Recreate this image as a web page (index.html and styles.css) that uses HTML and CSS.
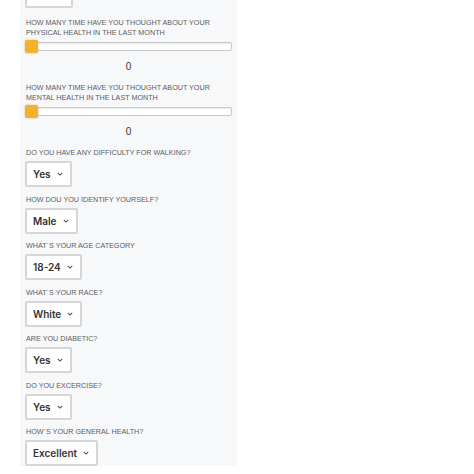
FILE: index.html
```html
<!DOCTYPE html>
<html lang="en">
<head>
    <meta charset="UTF-8">
    <meta name="viewport" content="width=device-width, initial-scale=1.0">
    <title>Health Survey</title>
    <link rel="stylesheet" href="styles.css">
</head>
<body>
    <div class="panel">
        <!-- previous question, scrolled mostly out of view -->
        <div class="field top-field">
            <div class="select">&nbsp;</div>
        </div>

        <div class="field">
            <div class="label">How many time have you thought about your<br>physical health in the last month</div>
            <div class="slider"><div class="thumb"></div></div>
            <div class="value">0</div>
        </div>

        <div class="field">
            <div class="label">How many time have you thought about your<br>mental health in the last month</div>
            <div class="slider"><div class="thumb"></div></div>
            <div class="value">0</div>
        </div>

        <div class="field">
            <div class="label">Do you have any difficulty for walking?</div>
            <div class="select">Yes <svg class="chev" viewBox="0 0 8 5"><path d="M1 1l3 3 3-3"/></svg></div>
        </div>

        <div class="field">
            <div class="label">How dou you identify yourself?</div>
            <div class="select">Male <svg class="chev" viewBox="0 0 8 5"><path d="M1 1l3 3 3-3"/></svg></div>
        </div>

        <div class="field">
            <div class="label">What´s your age category</div>
            <div class="select">18-24 <svg class="chev" viewBox="0 0 8 5"><path d="M1 1l3 3 3-3"/></svg></div>
        </div>

        <div class="field">
            <div class="label">What´s your race?</div>
            <div class="select">White <svg class="chev" viewBox="0 0 8 5"><path d="M1 1l3 3 3-3"/></svg></div>
        </div>

        <div class="field">
            <div class="label">Are you diabetic?</div>
            <div class="select">Yes <svg class="chev" viewBox="0 0 8 5"><path d="M1 1l3 3 3-3"/></svg></div>
        </div>

        <div class="field">
            <div class="label">Do you excercise?</div>
            <div class="select">Yes <svg class="chev" viewBox="0 0 8 5"><path d="M1 1l3 3 3-3"/></svg></div>
        </div>

        <div class="field">
            <div class="label">How´s your general health?</div>
            <div class="select">Excellent <svg class="chev" viewBox="0 0 8 5"><path d="M1 1l3 3 3-3"/></svg></div>
        </div>
    </div>
</body>
</html>
```

FILE: styles.css
```css
body {
    margin: 0;
    background-color: #fff;
    font-family: "Liberation Sans", Arial, sans-serif;
    color: #333;
    height: 474px;
    overflow: hidden;
}
.panel {
    margin-left: 20px;
    width: 207px;
    padding: 0 5px;
    min-height: 474px;
    background-color: #f7f8fa;
}
.field {
    margin-bottom: 7.5px;
}
.top-field {
    margin-top: -18px;
    margin-bottom: 10px;
}
.label {
    font-size: 7.2px;
    line-height: 10px;
    color: #5c5c5c;
    text-transform: uppercase;
    padding-left: 1px;
    margin-bottom: 3px;
}
.slider {
    position: relative;
    height: 7px;
    margin-top: 4px;
    border: 1px solid #c9c9c9;
    border-radius: 2px;
    background-color: #fff;
    box-shadow: inset 0 1px 1px rgba(0, 0, 0, 0.08);
}
.thumb {
    position: absolute;
    left: -1px;
    top: -3px;
    width: 13px;
    height: 13px;
    border-radius: 2px;
    background-color: #f2b22e;
    box-shadow: 0 0 2px rgba(180, 120, 0, 0.5);
}
.value {
    text-align: center;
    font-size: 10px;
    line-height: 12px;
    margin-top: 10px;
    margin-bottom: 10px;
    color: #333;
}
.select {
    display: inline-flex;
    align-items: center;
    gap: 6px;
    height: 22px;
    padding: 0 7px 0 6px;
    border: 2px solid #d6d6d6;
    border-radius: 2px;
    background-color: #fff;
    font-family: Inter, "Liberation Sans", sans-serif;
    font-size: 10px;
    font-weight: 600;
    color: #333;
}
.top-field .select {
    width: 31px;
}
.chev {
    width: 6px;
    height: 4px;
    fill: none;
    stroke: #555;
    stroke-width: 1.4;
}
```
